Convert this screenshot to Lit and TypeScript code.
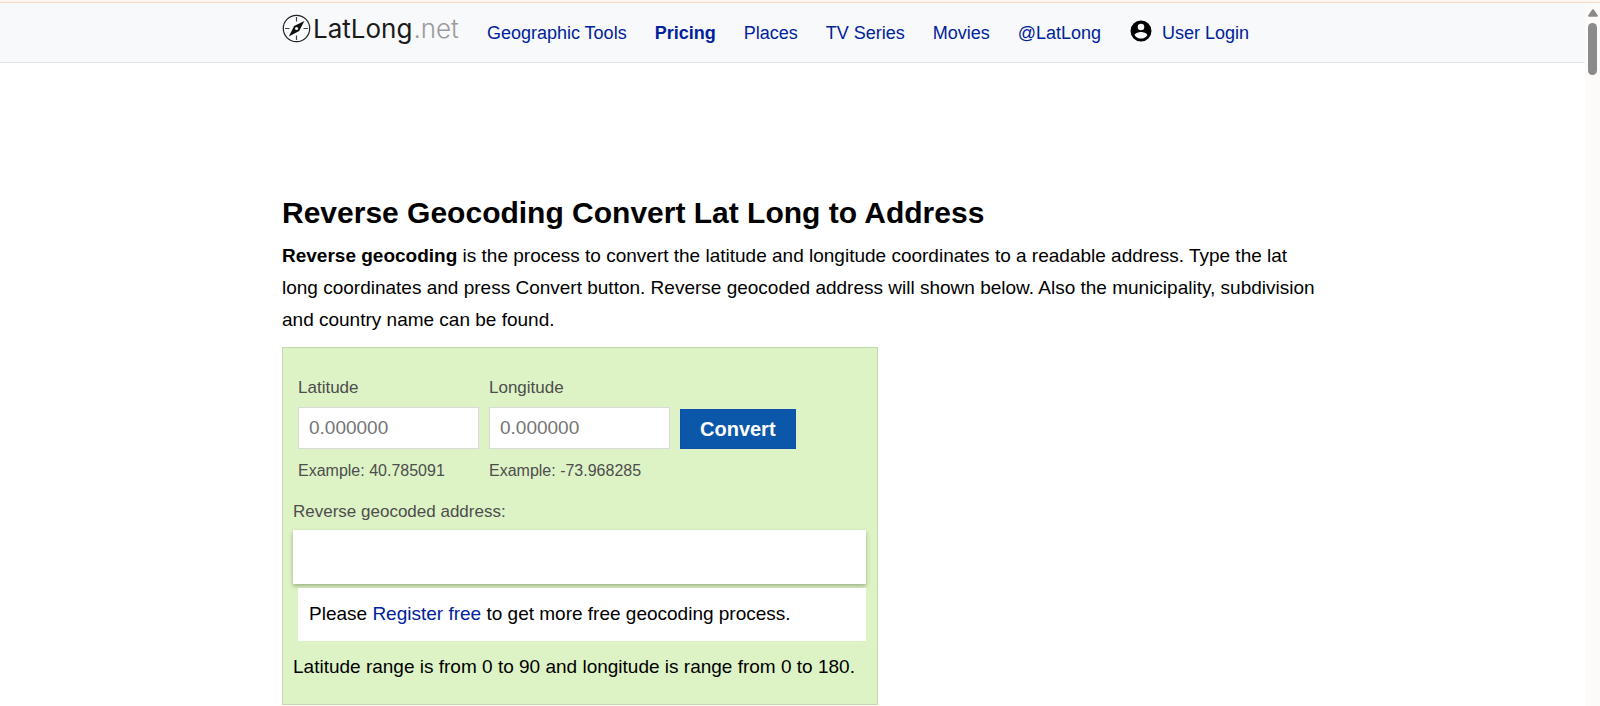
import { LitElement, html, css } from "lit";
import { customElement, state } from "lit/decorators.js";

@customElement("site-logo")
class SiteLogo extends LitElement {
  static styles = css`
    :host {
      display: block;
    }
    .logo {
      display: flex;
      align-items: center;
      color: #1b1b1b;
      font: 26px/32px Inter, sans-serif;
      text-decoration: none;
    }
    .mark {
      width: 30px;
      height: 30px;
      margin-right: 1px;
    }
    .tld {
      margin-left: 1px;
      color: #9b9b9b;
      font-weight: 300;
    }
  `;

  render() {
    return html`
      <a class="logo" href="#">
        <svg class="mark" viewBox="0 0 30 30" aria-hidden="true">
          <circle cx="14.5" cy="14.5" r="13.2" fill="#fff" fill-opacity=".5" stroke="#222" stroke-width="1.2" />
          <path d="M14.5 3v4.500M14.5 21.500V26M3 14.500h4.500M21.500 14.500H26" stroke="#444" stroke-width="1.2" />
          <path fill-rule="evenodd" d="M22.400 7 17.200 17 6.800 22.400l5.300-10.300ZM14.600 12.900a1.600 1.600 0 1 0 0 3.200 1.600 1.600 0 0 0 0-3.200Z" fill="#111" />
        </svg>
        <span>LatLong</span><span class="tld">.net</span>
      </a>
    `;
  }
}

@customElement("site-header")
class SiteHeader extends LitElement {
  static styles = css`
    :host {
      display: block;
      background: #f7f9fb;
      border-bottom: 1px solid #dfe6e6;
    }
    .inner {
      box-sizing: border-box;
      max-width: 1021px;
      height: 59px;
      margin: 0 auto;
      padding-bottom: 8px;
      display: flex;
      align-items: center;
    }
    .nav {
      display: flex;
      align-items: center;
      gap: 28px;
      margin-left: 28px;
      padding-top: 9px;
      white-space: nowrap;
    }
    .link {
      color: #00229a;
      font-size: 18px;
      line-height: 24px;
      text-decoration: none;
    }
    .strong {
      font-weight: 700;
    }
    .user {
      display: flex;
      gap: 9px;
    }
    .avatar {
      width: 24px;
      height: 24px;
      margin-top: -2px;
      fill: #000;
    }
  `;

  render() {
    return html`
      <header class="inner">
        <site-logo></site-logo>
        <nav class="nav">
          <a class="link" href="#">Geographic Tools</a>
          <a class="link strong" href="#">Pricing</a>
          <a class="link" href="#">Places</a>
          <a class="link" href="#">TV Series</a>
          <a class="link" href="#">Movies</a>
          <a class="link" href="#">@LatLong</a>
          <a class="link user" href="#">
            <svg class="avatar" viewBox="0 0 24 24" aria-hidden="true">
              <path d="M12 1.500a10.500 10.500 0 1 0 0 21 10.500 10.500 0 0 0 0-21Zm0 3.200a3.300 3.300 0 1 1 0 6.600 3.300 3.300 0 0 1 0-6.600Zm0 14.900a7.500 7.500 0 0 1-6.300-3.400c0-2.100 4.200-3.200 6.300-3.200s6.300 1.100 6.300 3.200a7.500 7.500 0 0 1-6.300 3.400Z" />
            </svg>
            <span>User Login</span>
          </a>
        </nav>
      </header>
    `;
  }
}

@customElement("geocode-form")
class GeocodeForm extends LitElement {
  @state() private address = "";

  static styles = css`
    :host {
      display: block;
    }
    .form {
      box-sizing: border-box;
      max-width: 596px;
      padding: 27px 11px 21px 10px;
      background: #ddf3c6;
      border: 1px solid #c1d9a9;
    }
    .fields {
      display: flex;
      align-items: flex-start;
      gap: 10px;
      padding-left: 5px;
    }
    .field {
      display: flex;
      flex-direction: column;
      width: 181px;
    }
    .label,
    .result-label {
      color: #4d4d4d;
      font-size: 17px;
      line-height: 26px;
    }
    .hint {
      color: #4d4d4d;
      font-size: 16px;
      line-height: 26px;
    }
    .input {
      box-sizing: border-box;
      width: 100%;
      height: 42px;
      margin: 6px 0 9px;
      padding: 0 10px;
      border: 1px solid #dadada;
      border-radius: 0;
      background: #fff;
      color: #333;
      font: inherit;
    }
    .input::placeholder {
      color: #757575;
      opacity: 1;
    }
    .button {
      height: 40px;
      margin-top: 34px;
      padding: 0 19px;
      border: 1px solid #0f4fa8;
      background: #0b57a9;
      color: #fff;
      font: inherit;
      font-size: 20px;
      font-weight: 700;
      cursor: pointer;
    }
    .result-label {
      display: block;
      margin-top: 15px;
    }
    .result {
      display: block;
      box-sizing: border-box;
      width: 100%;
      height: 54px;
      margin: 5px 0 4px;
      padding: 10px;
      border: 0;
      background: #fff;
      box-shadow: 0 2px 4px rgba(60, 80, 40, 0.4);
      font: inherit;
      resize: none;
    }
    .notice {
      margin: 0 0 0 5px;
      padding: 10px 11px 11px;
      background: #fff;
    }
    .notice-link {
      color: #00229a;
      text-decoration: none;
    }
    .range {
      margin: 10px 0 0;
    }
  `;

  private convert(event: Event) {
    event.preventDefault();
    this.address = "";
  }

  render() {
    return html`
      <form class="form" @submit=${this.convert}>
        <div class="fields">
          <div class="field">
            <label class="label" for="lat">Latitude</label>
            <input class="input" id="lat" type="text" placeholder="0.000000" />
            <span class="hint">Example: 40.785091</span>
          </div>
          <div class="field">
            <label class="label" for="lng">Longitude</label>
            <input class="input" id="lng" type="text" placeholder="0.000000" />
            <span class="hint">Example: -73.968285</span>
          </div>
          <button class="button" type="submit">Convert</button>
        </div>
        <label class="result-label" for="address">Reverse geocoded address:</label>
        <textarea class="result" id="address" readonly .value=${this.address}></textarea>
        <p class="notice">
          Please <a class="notice-link" href="#">Register free</a> to get more free geocoding process.
        </p>
        <p class="range">Latitude range is from 0 to 90 and longitude is range from 0 to 180.</p>
      </form>
    `;
  }
}

@customElement("app-root")
class AppRoot extends LitElement {
  static styles = css`
    :host {
      display: flex;
      flex-direction: column;
      min-height: 100vh;
      background: #fff;
      color: #000;
      font: 19px/32px "Liberation Sans", Arial, sans-serif;
    }
    .edge {
      height: 1px;
      border-top: 1px solid #fdf5f0;
      border-bottom: 1px solid #f7d9cb;
      background: #fdf5f0;
    }
    .view {
      display: flex;
      flex: 1;
    }
    .page {
      flex: 1;
      min-width: 0;
    }
    .content {
      max-width: 1021px;
      margin: 0 auto;
      padding-top: 130px;
    }
    .title {
      margin: 0;
      font-size: 30px;
      line-height: 40px;
    }
    .intro {
      margin: 7px -16px 11px 0;
    }
    .scrollbar {
      display: flex;
      flex-direction: column;
      align-items: center;
      gap: 6px;
      width: 15px;
      padding-top: 6px;
      background: #fcfbf9;
    }
    .arrow {
      width: 10px;
      height: 8px;
      fill: #8b8b8b;
    }
    .thumb {
      width: 9px;
      height: 52px;
      border-radius: 5px;
      background: #8b8b8b;
    }
  `;

  render() {
    return html`
      <div class="edge"></div>
      <div class="view">
        <div class="page">
          <site-header></site-header>
          <main class="content">
            <h1 class="title">Reverse Geocoding Convert Lat Long to Address</h1>
            <p class="intro">
              <b>Reverse geocoding</b> is the process to convert the latitude and longitude coordinates to a readable
              address. Type the lat long coordinates and press Convert button. Reverse geocoded address will shown
              below. Also the municipality, subdivision and country name can be found.
            </p>
            <geocode-form></geocode-form>
          </main>
        </div>
        <div class="scrollbar" aria-hidden="true">
          <svg class="arrow" viewBox="0 0 10 8"><path d="M4.200.6q.8-.9 1.600 0l3.900 5.600q.6 1.300-.8 1.500H1.100q-1.400-.2-.8-1.500Z" /></svg>
          <div class="thumb"></div>
        </div>
      </div>
    `;
  }
}
